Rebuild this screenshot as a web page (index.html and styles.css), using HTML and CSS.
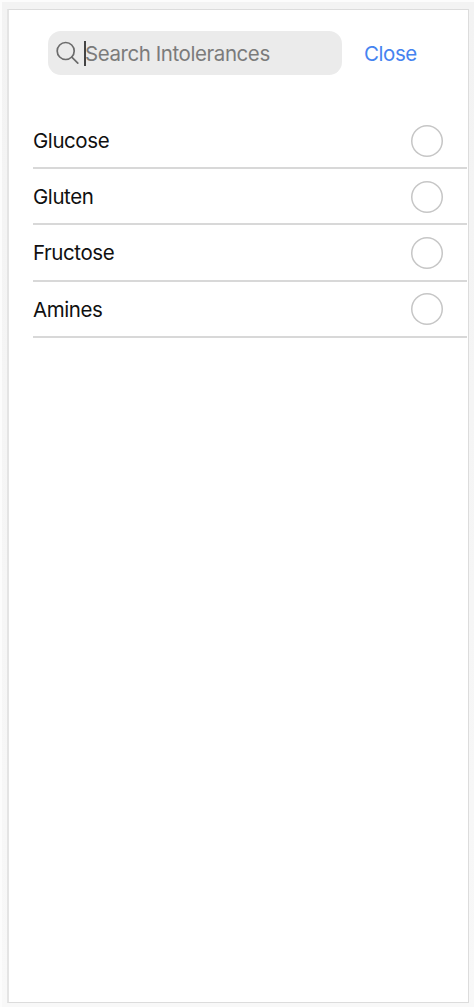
FILE: index.html
```html
<!DOCTYPE html>
<html lang="en">
<head>
<meta charset="utf-8">
<title>Intolerances</title>
<link rel="stylesheet" href="styles.css">
</head>
<body>
<div class="backdrop">
  <main class="sheet">
    <header class="toolbar">
      <div class="search">
        <svg class="search-icon" viewBox="0 0 24 24" width="24" height="24"><circle cx="9.7" cy="10" r="8.5"/><path d="M15.8 16.1 21.8 22.1"/></svg>
        <span class="caret"></span>
        <span class="placeholder">Search Intolerances</span>
      </div>
      <a class="close">Close</a>
    </header>
    <ul class="list">
      <li class="row"><span class="label">Glucose</span><i class="radio"></i></li>
      <li class="row"><span class="label">Gluten</span><i class="radio"></i></li>
      <li class="row"><span class="label">Fructose</span><i class="radio"></i></li>
      <li class="row"><span class="label">Amines</span><i class="radio"></i></li>
    </ul>
  </main>
</div>
</body>
</html>
```
FILE: styles.css
```css
* { box-sizing: border-box; }
body { margin: 0; background: #fcfcfc; font-family: Inter, "Liberation Sans", sans-serif; font-size: 20.5px; line-height: 24px; letter-spacing: -0.43px; }
.backdrop { height: 1007px; padding: 7px 5px 4px; border-top: 2px solid #fcfcfc; border-left: 2px solid #fcfcfc; background: linear-gradient(#f3f3f3, #f8f8f8); }
.sheet { height: 994px; width: 462px; background: #fff; border: 1px solid #dcdcdc; border-left: 2px solid #e4e4e4; }
.toolbar { display: flex; align-items: center; height: 44px; margin: 21px 0 0 39px; }
.search { display: flex; align-items: center; width: 293.5px; height: 44px; padding-left: 8px; border-radius: 13px; background: #ebebeb; }
.search-icon { flex: none; fill: none; stroke: #6b6b6b; stroke-width: 1.7; stroke-linecap: round; }
.caret { flex: none; width: 2px; height: 25px; margin-left: 4px; background: #444; }
.placeholder { color: #7b7b7b; white-space: nowrap; margin-left: -1px; padding-top: 2px; }
.close { margin-left: 22.5px; padding-top: 2px; color: #4583f0; }
.list { list-style: none; margin: 38px 0 0; padding: 0 1px 0 24px; }
.row { display: flex; align-items: center; justify-content: space-between; height: 56.2px; padding: 1px 24px 0 0; border-bottom: 2px solid #d8d8d8; color: #101010; }
.label { padding-top: 1px; }
.radio { width: 32px; height: 32px; box-shadow: inset 0 0 0 1.5px #c6c6c6; border-radius: 50%; }
```
